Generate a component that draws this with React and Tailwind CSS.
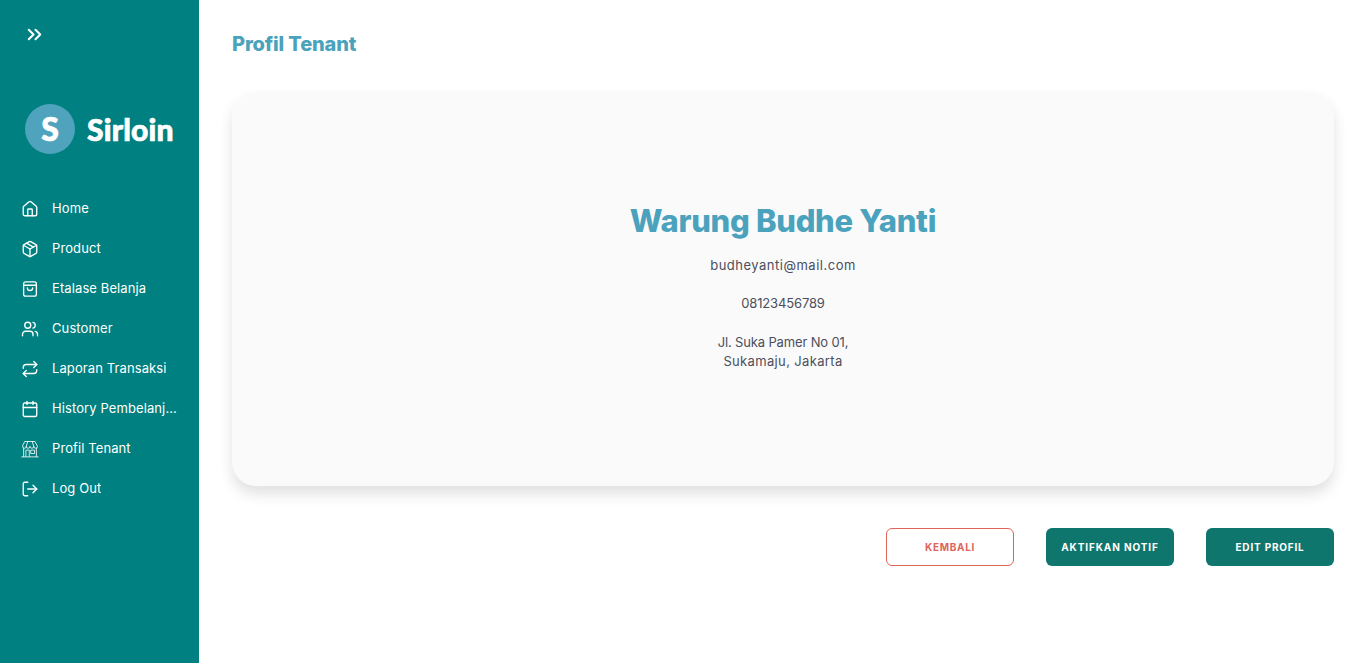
import {
  ChevronsRight,
  House,
  Package,
  Users,
  Repeat,
  Calendar,
  LogOut,
} from "lucide-react";

function BagIcon(props) {
  return (
    <svg viewBox="0 0 24 24" fill="none" stroke="currentColor" strokeWidth="2" strokeLinecap="round" strokeLinejoin="round" {...props}>
      <rect x="3.5" y="2.5" width="17" height="19" rx="2.5" />
      <path d="M3.5 7h17" />
      <path d="M8.5 10.5c0 2 1.5 3.5 3.5 3.5s3.5-1.5 3.5-3.5" />
    </svg>
  );
}

function StoreIcon(props) {
  return (
    <svg viewBox="0 0 24 24" fill="none" stroke="currentColor" strokeLinecap="round" strokeLinejoin="round" {...props} strokeWidth="1.1">
      <path d="M5.5 2h13l3.5 6.5a2.5 2.5 0 0 1-5 0 2.5 2.5 0 0 1-5 0 2.5 2.5 0 0 1-5 0 2.5 2.5 0 0 1-5 0z" />
      <path d="M9 2 7 8.500M15 2l2 6.500" />
      <path d="M3.500 11v11M20.500 11v11M1 22.500h22" />
      <path d="M6.500 22v-8.500h4.500V22" />
      <rect x="13.500" y="13.500" width="4.500" height="4.500" />
    </svg>
  );
}

const menu = [
  { label: "Home", icon: House },
  { label: "Product", icon: Package },
  { label: "Etalase Belanja", icon: BagIcon },
  { label: "Customer", icon: Users },
  { label: "Laporan Transaksi", icon: Repeat },
  { label: "History Pembelanjaan", icon: Calendar },
  { label: "Profil Tenant", icon: StoreIcon },
  { label: "Log Out", icon: LogOut },
];

function Sidebar() {
  return (
    <aside className="flex h-[663px] w-[199px] shrink-0 flex-col bg-[#008080] text-white">
      <div className="pl-[23px] pt-[23px]">
        <ChevronsRight className="h-[23px] w-[23px]" strokeWidth={2.1} />
      </div>
      <div className="mt-[58px] flex items-center pl-[25px]">
        <div className="flex h-[50px] w-[50px] items-center justify-center rounded-full bg-[#4fa3bd] font-['Lato'] text-[32px] font-black [-webkit-text-stroke:0.7px_white]">
          S
        </div>
        <span className="ml-[12px] font-['Lato'] text-[30px] leading-none font-black tracking-[0.2px] [-webkit-text-stroke:0.7px_white]">Sirloin</span>
      </div>
      <nav className="mt-[35px] flex flex-col">
        {menu.map(({ label, icon: Icon }) => (
          <a key={label} className="flex h-[40px] items-center pl-[21px] pr-[19px]">
            <Icon className="h-[18px] w-[18px] shrink-0" strokeWidth={1.8} />
            <span className="ml-[13px] truncate text-[13px] tracking-[0.1px]">{label}</span>
          </a>
        ))}
      </nav>
    </aside>
  );
}

export default function App() {
  return (
    <div className="flex h-[663px] overflow-hidden bg-white font-['Inter',sans-serif]">
      <Sidebar />
      <main className="flex min-w-0 flex-1 flex-col pl-[33px] pr-[32px]">
        <h1 className="mt-[31px] text-[20px] leading-[26px] font-extrabold tracking-[-0.15px] text-[#4aa2bd]">Profil Tenant</h1>
        <section className="mt-[35px] flex h-[394px] flex-col items-center rounded-[24px] bg-[#fafafa] pt-[110px] text-center text-[13px] text-[#4b4f5c] shadow-[0_8px_14px_rgba(0,0,0,0.12)]">
          <h2 className="text-[31px] leading-[38px] font-extrabold tracking-[-0.3px] text-[#4aa2bd]">Warung Budhe Yanti</h2>
          <p className="mt-[15px] leading-[20px] tracking-[0.5px]">budheyanti@mail.com</p>
          <p className="mt-[18px] leading-[20px] tracking-[-0.15px]">08123456789</p>
          <p className="mt-[20px] leading-[19px]">
            <span className="block tracking-[-0.15px]">Jl. Suka Pamer No 01,</span>
            <span className="block tracking-[0.35px]">Sukamaju, Jakarta</span>
          </p>
        </section>
        <div className="mt-[42px] flex justify-end gap-[32px]">
          <button className="h-[38px] w-[128px] rounded-[6px] border border-[#e0645a] text-[10px] font-bold tracking-[0.7px] text-[#e0645a]">
            KEMBALI
          </button>
          <button className="h-[38px] w-[128px] rounded-[6px] bg-[#0f766e] text-[10px] font-bold tracking-[0.9px] text-white">
            AKTIFKAN NOTIF
          </button>
          <button className="h-[38px] w-[128px] rounded-[6px] bg-[#0f766e] text-[10px] font-bold tracking-[0.8px] text-white">
            EDIT PROFIL
          </button>
        </div>
      </main>
    </div>
  );
}
